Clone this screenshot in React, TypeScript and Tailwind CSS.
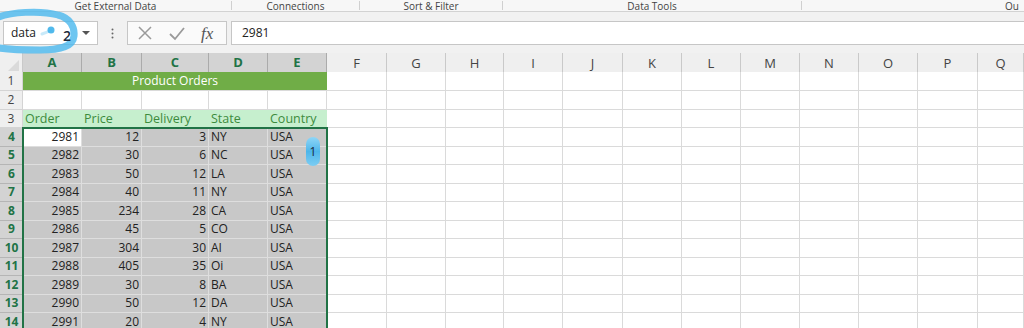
import React from 'react';

const COLS = ['A', 'B', 'C', 'D', 'E', 'F', 'G', 'H', 'I', 'J', 'K', 'L', 'M', 'N', 'O', 'P', 'Q'];
const GRID = 'grid grid-cols-[23px_59px_60px_67px_59px_59px_60px_59px_58px_59px_60px_59px_59px_59px_59px_59px_60px_1fr]';
const ROW_H = ['h-[19px]', 'h-[19px]', 'h-[18px]', 'h-[19px]', 'h-[18px]', 'h-[19px]', 'h-[18px]', 'h-[19px]', 'h-[18px]', 'h-[19px]', 'h-[18px]', 'h-[19px]', 'h-[18px]', 'h-[19px]'];

const orders: (string | number)[][] = [
  [2981, 12, 3, 'NY', 'USA'],
  [2982, 30, 6, 'NC', 'USA'],
  [2983, 50, 12, 'LA', 'USA'],
  [2984, 40, 11, 'NY', 'USA'],
  [2985, 234, 28, 'CA', 'USA'],
  [2986, 45, 5, 'CO', 'USA'],
  [2987, 304, 30, 'AI', 'USA'],
  [2988, 405, 35, 'Oi', 'USA'],
  [2989, 30, 8, 'BA', 'USA'],
  [2990, 50, 12, 'DA', 'USA'],
  [2991, 20, 4, 'NY', 'USA'],
];

function RowHeader({ n, selected }: { n: number; selected: boolean }) {
  return (
    <div
      className={
        selected
          ? 'flex items-center justify-center pb-[1px] bg-[#d3d3d3] border-b border-[#b5b5b5] text-[#217346] font-bold text-[12px] leading-none'
          : 'flex items-center justify-center bg-[#efefef] border-b border-r border-[#d4d4d4] text-[#444] text-[12px] leading-none'
      }
    >
      {n}
    </div>
  );
}

function EmptyCells() {
  return (
    <>
      {COLS.slice(5).map((c) => (
        <div key={c} className="border-b border-r border-[#dadada] bg-white" />
      ))}
    </>
  );
}

export default function App() {
  return (
    <div
      className="relative w-[1024px] h-[328px] overflow-hidden bg-white text-[#222]"
      style={{ fontFamily: '"Open Sans", "Liberation Sans", sans-serif' }}
    >
      {/* ribbon group labels */}
      <div className="flex h-[12px] bg-[#f7f7f7] border-b border-[#d2d2d2] text-[10px] leading-[10px] text-[#444]">
        <div className="w-[232px] flex justify-center border-r border-[#d0d0d0] my-[1px]">Get External Data</div>
        <div className="w-[128px] flex justify-center border-r border-[#d0d0d0] my-[1px]">Connections</div>
        <div className="w-[143px] flex justify-center border-r border-[#d0d0d0] my-[1px]">Sort &amp; Filter</div>
        <div className="w-[299px] flex justify-center border-r border-[#d0d0d0] my-[1px]">Data Tools</div>
        <div className="flex-1 pl-[203px] my-[1px]">Ou</div>
      </div>

      {/* formula bar */}
      <div className="flex items-start h-[41px] bg-[#f1f1f1] pt-[9px]">
        <div className="ml-[3px] w-[95px] h-[24px] bg-white border border-[#c6c6c6] flex items-center">
          <span className="pl-[7px] text-[12px] text-[#222] flex-1">data</span>
          <svg width="8" height="5" viewBox="0 0 8 5" className="mr-[7px]">
            <path d="M0 0 L8 0 L4 4 Z" fill="#555" />
          </svg>
        </div>
        <div className="w-[29px] h-[24px] flex items-center justify-center">
          <svg width="3" height="11" viewBox="0 0 3 11">
            <circle cx="1.5" cy="1.5" r="1" fill="#666" />
            <circle cx="1.5" cy="5.5" r="1" fill="#666" />
            <circle cx="1.5" cy="9.5" r="1" fill="#666" />
          </svg>
        </div>
        <div className="w-[100px] h-[24px] bg-[#fafafa] border border-[#c6c6c6] flex items-center">
          <svg width="16" height="16" viewBox="0 0 16 16" className="ml-[9px]">
            <path d="M2 2 L14 14 M14 2 L2 14" stroke="#9a9a9a" strokeWidth="1.5" />
          </svg>
          <svg width="16" height="16" viewBox="0 0 16 16" className="ml-[16px]">
            <path d="M1 9 L6 14 L15 3" stroke="#9a9a9a" strokeWidth="1.8" fill="none" />
          </svg>
          <span
            className="ml-[16px] text-[17px] italic text-[#555] leading-none"
            style={{ fontFamily: '"Liberation Serif", "DejaVu Serif", serif' }}
          >
            fx
          </span>
        </div>
        <div className="ml-[4px] flex-1 h-[24px] bg-white border-y border-l border-[#c6c6c6] flex items-center pl-[10px] text-[12px]">
          2981
        </div>
      </div>

      {/* column headers */}
      <div className={`${GRID} h-[19px] bg-[#efefef]`}>
        <div className="border-r border-b border-[#c9c9c9] flex items-end justify-end pr-[3px] pb-[3px]">
          <svg width="11" height="11" viewBox="0 0 11 11">
            <path d="M11 0 L11 11 L0 11 Z" fill="#dadada" />
          </svg>
        </div>
        {COLS.map((c, i) =>
          i < 5 ? (
            <div
              key={c}
              className="flex items-center justify-center bg-[#d3d3d3] border-r border-[#ababab] border-b-2 border-b-[#217346] text-[13px] font-bold text-[#217346]"
            >
              {c}
            </div>
          ) : (
            <div
              key={c}
              className="flex items-center justify-center border-r border-b border-[#c9c9c9] border-b-[#ababab] text-[13px] text-[#444]"
            >
              {c}
            </div>
          )
        )}
      </div>

      {/* row 1 */}
      <div className={`${GRID} ${ROW_H[0]}`}>
        <RowHeader n={1} selected={false} />
        <div className="col-span-5 bg-[#70ad47] border-b border-[#dadada] flex items-center justify-center text-white text-[12px]">
          Product Orders
        </div>
        <EmptyCells />
      </div>

      {/* row 2 */}
      <div className={`${GRID} ${ROW_H[1]}`}>
        <RowHeader n={2} selected={false} />
        {COLS.slice(0, 5).map((c) => (
          <div key={c} className="border-b border-r border-[#dadada] bg-white" />
        ))}
        <EmptyCells />
      </div>

      {/* row 3 */}
      <div className={`${GRID} ${ROW_H[2]}`}>
        <RowHeader n={3} selected={false} />
        {['Order', 'Price', 'Delivery', 'State', 'Country'].map((h) => (
          <div key={h} className="bg-[#c6efce] flex items-center pl-[2px] text-[12.5px] text-[#3d8b3d] leading-none">
            {h}
          </div>
        ))}
        <EmptyCells />
      </div>

      {/* data rows */}
      {orders.map((r, i) => (
        <div key={i} className={`${GRID} ${ROW_H[i + 3]}`}>
          <RowHeader n={i + 4} selected={true} />
          {r.map((v, j) => (
            <div
              key={j}
              className={
                (i === 0 && j === 0 ? 'bg-white ' : 'bg-[#c8c8c8] ') +
                'border-b border-r border-[#dedede] flex items-center pb-[1px] text-[12px] leading-none ' +
                (typeof v === 'number' ? 'justify-end pr-[2px]' : 'pl-[2px]')
              }
            >
              {v}
            </div>
          ))}
          <EmptyCells />
        </div>
      ))}

      {/* selection outline A4:E14 */}
      <div className="absolute left-[22px] top-[127px] w-[306px] h-[210px] border-2 border-[#217346] pointer-events-none" />

      {/* blue marker around the name box */}
      <svg className="absolute left-0 top-[8px] pointer-events-none" width="84" height="48" viewBox="0 0 84 48">
        <path
          d="M-4 10 C10 4 40 2 58 7 C70 10 75 19 74 28 C73 38 62 42 40 42 C18 42 2 41 -6 39"
          stroke="#4ab8ee"
          strokeWidth="7"
          fill="none"
          strokeLinecap="round"
          opacity="0.8"
        />
        <path d="M51 22 C48 24 45 25 42 26" stroke="#4ab8ee" strokeWidth="3" strokeLinecap="round" opacity="0.3" />
        <circle cx="51" cy="22" r="3.5" fill="#3fb3ea" opacity="0.9" />
      </svg>
      <span className="absolute left-[63px] top-[25px] text-[14px] font-semibold text-[#1b2a3a]">2</span>

      {/* badge 1 */}
      <div className="absolute left-[306px] top-[137px] w-[14px] h-[29px] rounded-full bg-gradient-to-b from-[#8ed6f7] via-[#4db6ea] to-[#7ccdf3] flex items-center justify-center text-[12px] text-[#1b2a3a]">
        1
      </div>
    </div>
  );
}
